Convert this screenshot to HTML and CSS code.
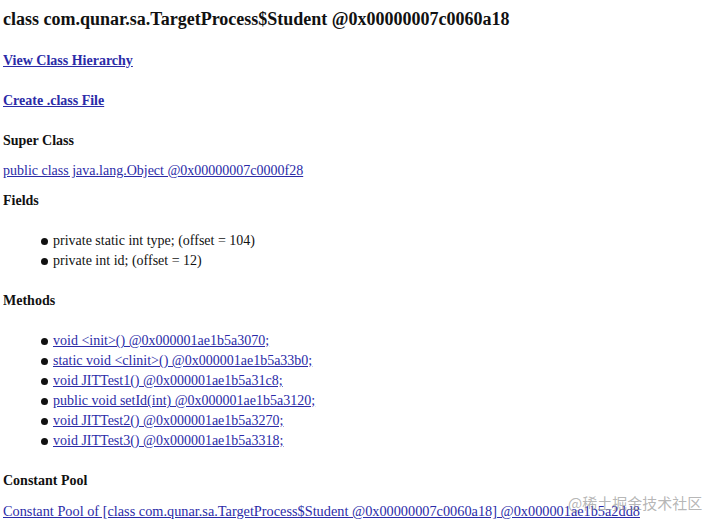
FILE: index.html
```html
<!DOCTYPE html>
<html lang="en">
<head>
  <meta charset="UTF-8">
  <title>Class Browser</title>
  <link rel="stylesheet" href="styles.css">
</head>
<body>
  <h1 class="title">class com.qunar.sa.TargetProcess$Student @0x00000007c0060a18</h1>

  <p class="action"><a href="#">View Class Hierarchy</a></p>
  <p class="action"><a href="#">Create .class File</a></p>

  <h2 class="section">Super Class</h2>
  <p class="ref"><a href="#">public class java.lang.Object @0x00000007c0000f28</a></p>

  <h2 class="section">Fields</h2>
  <ul class="items">
    <li>private static int type; (offset = 104)</li>
    <li>private int id; (offset = 12)</li>
  </ul>

  <h2 class="section">Methods</h2>
  <ul class="items">
    <li><a href="#">void &lt;init&gt;() @0x000001ae1b5a3070;</a></li>
    <li><a href="#">static void &lt;clinit&gt;() @0x000001ae1b5a33b0;</a></li>
    <li><a href="#">void JITTest1() @0x000001ae1b5a31c8;</a></li>
    <li><a href="#">public void setId(int) @0x000001ae1b5a3120;</a></li>
    <li><a href="#">void JITTest2() @0x000001ae1b5a3270;</a></li>
    <li><a href="#">void JITTest3() @0x000001ae1b5a3318;</a></li>
  </ul>

  <h2 class="section">Constant Pool</h2>
  <p class="ref wide"><a href="#">Constant Pool of [class com.qunar.sa.TargetProcess$Student @0x00000007c0060a18] @0x000001ae1b5a2dd8</a></p>

  <div class="watermark">@稀土掘金技术社区</div>
</body>
</html>
```

FILE: styles.css
```css
body {
  font-family: "Liberation Serif", serif;
  font-size: 14px;
  line-height: 20px;
  color: #111;
  background: #fff;
  margin: 0 0 0 3px;
  padding-top: 9px;
}
a {
  color: #2b2ba8;
}
.title {
  font-size: 18px;
  line-height: 20px;
  margin: 0 0 22px;
}
.action {
  font-weight: bold;
  margin: 20px 0;
}
.section {
  font-size: 14px;
  line-height: 20px;
  margin: 10px 0;
}
.ref {
  margin: 0;
}
.wide {
  font-size: 14.3px;
}
.items {
  list-style: none;
  margin: 20px 0;
  padding-left: 38px;
}
.items li::before {
  content: "";
  display: inline-block;
  width: 7px;
  height: 7px;
  border-radius: 50%;
  background: #111;
  margin-right: 5px;
  vertical-align: 0;
}
.watermark {
  position: absolute;
  left: 568px;
  top: 493px;
  font-family: "Noto Sans CJK SC", sans-serif;
  font-size: 15px;
  line-height: 20px;
  color: rgba(140, 140, 140, 0.65);
}
```
